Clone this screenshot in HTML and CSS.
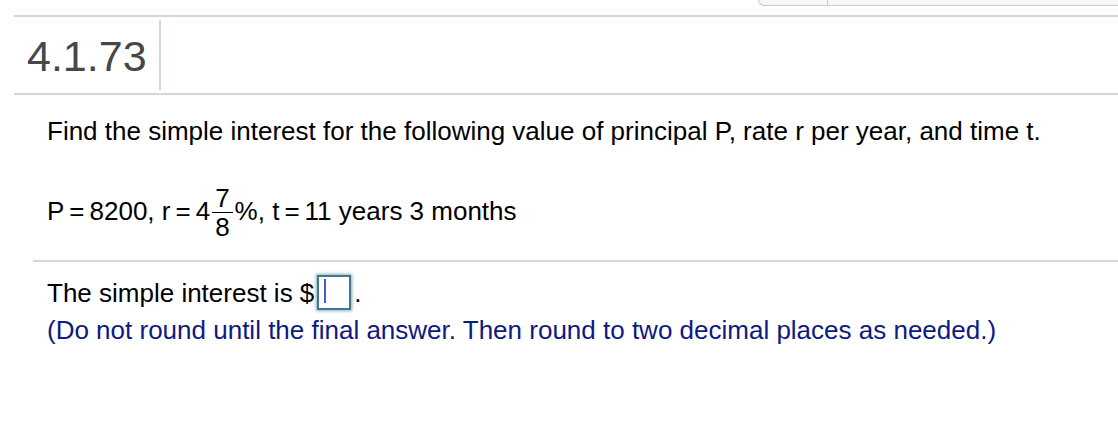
FILE: index.html
```html
<!DOCTYPE html>
<html>
<head>
<meta charset="utf-8">
<link rel="stylesheet" href="styles.css">
</head>
<body>
<div class="tabs">
  <div class="tabbox"><div class="tab1"></div><div class="tab2"></div></div>
</div>
<div class="header">
  <div class="qnum">4.1.73</div>
</div>
<div class="question">
  <p class="stem">Find the simple interest for the following value of principal P, rate r per year, and time t.</p>
  <p class="given">P<span class="eq">=</span>8200, r<span class="eq">=</span>4<span class="frac"><span class="num">7</span><span class="den">8</span></span>%, t<span class="eq">=</span>11 years 3 months</p>
</div>
<div class="answer">
  <p class="ans">The simple interest is $<span class="box"><span class="caret"></span></span>.</p>
  <p class="note">(Do not round until the final answer. Then round to two decimal places as needed.)</p>
</div>
</body>
</html>
```
FILE: styles.css
```css
html, body {
  margin: 0;
  padding: 0;
  background: #fff;
}
body {
  font-family: "Liberation Sans", Arial, sans-serif;
  color: #000;
  width: 1118px;
  height: 442px;
  overflow: hidden;
}
.tabs {
  display: flex;
  justify-content: flex-end;
  height: 7px;
}
.tabbox {
  width: 359px;
  height: 5px;
  display: flex;
  border: 1px solid #cccccc;
  border-top: none;
  border-right: none;
  border-radius: 0 0 0 6px;
  background: #f7f7f7;
}
.tab1 {
  width: 68px;
  border-right: 1px solid #cccccc;
}
.tab2 { flex: 1; }
.header {
  margin: 8px 0 0 14px;
  border-top: 2px solid #d3d5df;
  border-bottom: 2px solid #d3d5df;
  display: flex;
  padding: 3px 0;
  box-sizing: border-box;
  height: 80px;
}
.qnum {
  font-size: 43px;
  color: #474747;
  padding: 8px 12px 0 13px;
  border-right: 2px solid #d3d5df;
  line-height: 56px;
}
.question {
  padding-left: 47px;
}
p { margin: 0; }
.stem {
  font-size: 26px;
  margin-top: 21px;
  line-height: 30px;
}
.given {
  font-size: 26px;
  margin-top: 41px;
  line-height: 30px;
}
.eq {
  padding: 0 5px;
}
.frac {
  display: inline-flex;
  flex-direction: column;
  vertical-align: 13px;
  text-align: center;
  line-height: 22px;
  margin: 0 2px;
}
.num {
  border-bottom: 1.5px solid #000;
  padding: 0 3px 3px;
}
.den {
  padding-top: 3px;
}
.answer {
  margin: 22px 0 0 33px;
  border-top: 2px solid #d3d5df;
  padding-left: 14px;
}
.ans {
  font-size: 26px;
  margin-top: 13px;
  line-height: 36px;
}
.box {
  display: inline-block;
  width: 30px;
  height: 31px;
  border: 2px solid #41768f;
  box-shadow: 0 0 3px 1px rgba(65, 118, 143, 0.6);
  vertical-align: -8px;
  margin: 0 3px 0 3px;
  position: relative;
  background: #fff;
}
.caret {
  position: absolute;
  left: 5px;
  top: 2px;
  width: 2px;
  height: 24px;
  background: #3d5fd6;
}
.note {
  font-size: 26px;
  color: #0d1a80;
  line-height: 30px;
  margin-top: 4px;
}
```
